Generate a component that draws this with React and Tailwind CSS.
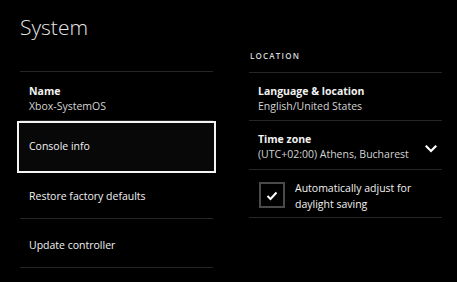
import React from "react";

export default function App() {
  const line = "border-b border-[#262626]";
  return (
    <div className="w-[457px] h-[282px] bg-black overflow-hidden text-[#f2f2f2] font-['Open_Sans',sans-serif] flex pl-[20px] gap-[36px]">
      {/* Left column */}
      <div className="w-[193px] flex flex-col">
        <div className={`h-[72px] ${line} pt-[12px]`}>
          <div className="text-[21px] font-light leading-[30px] text-[#e8e8e8]">System</div>
        </div>
        <div className={`h-[49px] ${line} pl-[9px] pt-[12px] flex flex-col`}>
          <span className="text-[10.5px] font-bold leading-[15px]">Name</span>
          <span className="text-[10.5px] leading-[15px] text-[#d4d4d4]">Xbox-SystemOS</span>
        </div>
        <div className="relative h-[49px] pl-[9px] pt-[18px]">
          <div className="absolute left-[-3px] right-[-3px] top-0 bottom-[-3px] border-2 border-[#f4f4f4] bg-[#080808]" />
          <span className="relative block text-[10.5px] leading-[15px]">Console info</span>
        </div>
        <div className={`h-[49px] ${line} pl-[9px] pt-[19px]`}>
          <span className="block text-[10.5px] leading-[15px]">Restore factory defaults</span>
        </div>
        <div className={`h-[49px] ${line} pl-[9px] pt-[19px]`}>
          <span className="block text-[10.5px] leading-[15px]">Update controller</span>
        </div>
      </div>

      {/* Right column */}
      <div className="w-[193px] flex flex-col">
        <div className={`h-[73px] ${line} pt-[50px] pl-[1px]`}>
          <span className="block text-[8px] font-semibold tracking-[1.2px] leading-[11px] text-[#d8d8d8]">LOCATION</span>
        </div>
        <div className={`h-[48px] ${line} pl-[9px] pt-[11px] flex flex-col`}>
          <span className="text-[10.5px] font-bold leading-[15px]">Language &amp; location</span>
          <span className="text-[10.5px] leading-[15px] text-[#d4d4d4]">English/United States</span>
        </div>
        <div className={`h-[49px] ${line} pl-[9px] pr-[5px] flex items-start justify-between`}>
          <div className="flex flex-col pt-[11px]">
            <span className="text-[10.5px] font-bold leading-[15px]">Time zone</span>
            <span className="text-[10.5px] leading-[15px] text-[#d4d4d4]">(UTC+02:00) Athens, Bucharest</span>
          </div>
          <svg width="12" height="8" viewBox="0 0 12 8" className="mt-[24px]">
            <path d="M1.5 1.5 L6 6 L10.5 1.5" fill="none" stroke="#ffffff" strokeWidth="2.2" strokeLinecap="square" />
          </svg>
        </div>
        <div className={`h-[48px] ${line} pl-[10px] flex items-start gap-[10px]`}>
          <div className="mt-[12px] w-[26px] h-[26px] border-2 border-[#4a4a4a] flex items-center justify-center">
            <svg width="12" height="10" viewBox="0 0 12 10" className="mt-[1px]">
              <path d="M1.5 5 L4.5 8 L10.5 1.5" fill="none" stroke="#ffffff" strokeWidth="2" />
            </svg>
          </div>
          <div className="flex flex-col mt-[10px]">
            <span className="text-[10.5px] leading-[16px]">Automatically adjust for</span>
            <span className="text-[10.5px] leading-[16px]">daylight saving</span>
          </div>
        </div>
      </div>
    </div>
  );
}
